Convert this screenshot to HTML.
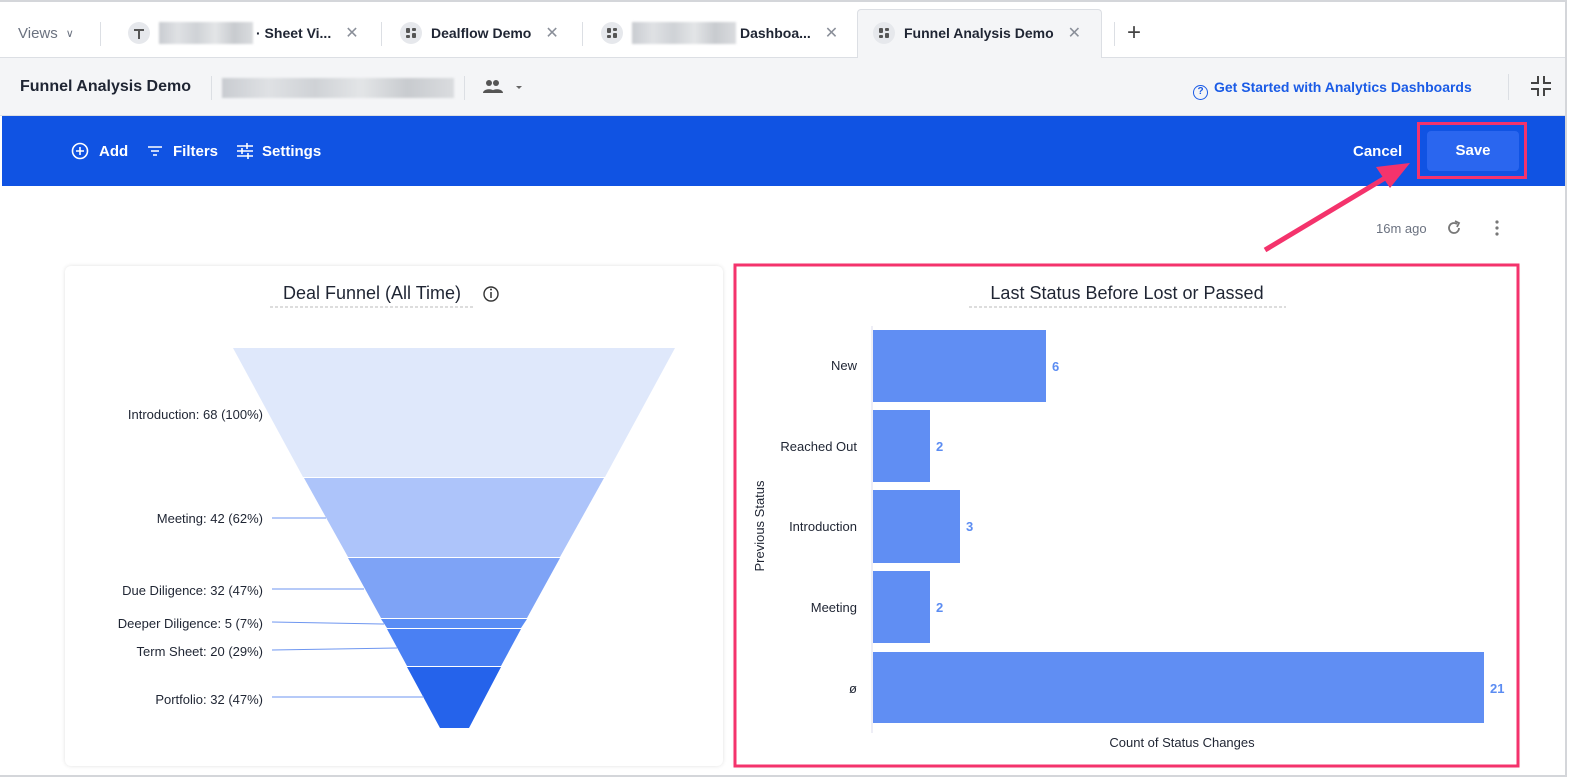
<!DOCTYPE html>
<html><head><meta charset="utf-8"><style>
*{box-sizing:border-box;margin:0;padding:0}
body{width:1578px;height:782px;overflow:hidden;background:#fff;font-family:"Liberation Sans",sans-serif;position:relative;color:#1f2533}
.a{position:absolute}
.frame{left:0;top:0;width:1567px;height:777px;border:2px solid #d4d6da;border-left:none}
.tabs{left:0;top:2px;width:1565px;height:56px;background:#fff;border-bottom:1px solid #dcdfe4}
.tab{position:absolute;top:3px;height:56px;display:flex;align-items:center;font-size:14px;font-weight:bold;color:#1f2533}
.ic{width:22px;height:22px;border-radius:11px;background:#e6e8ec;margin-right:9px;display:flex;align-items:center;justify-content:center}
.x{color:#8a8f99;font-weight:normal;font-size:16px;margin-left:14px}
.blur{background:linear-gradient(90deg,#c9ccd1,#dfe1e4,#cfd2d6,#e3e5e7,#c8cbcf,#dadcdf);height:22px;filter:blur(1px)}
.sep{width:1px;height:24px;background:#dcdfe4;position:absolute;top:20px}
.hdr{left:0;top:58px;width:1565px;height:58px;background:#f4f5f7;border-bottom:1px solid #dcdfe4}
.bar{left:2px;top:116px;width:1563px;height:70px;background:#1053e3;color:#fff;font-size:15px;font-weight:bold}
.card{background:#fff;border-radius:6px;box-shadow:0 0 4px rgba(0,0,0,.12)}
</style></head><body>
<div class="a frame"></div>
<div class="a tabs">
 <div class="tab" style="left:18px;color:#6b7280;font-weight:normal;font-size:15px">Views <span style="margin-left:8px;font-size:11px">&#8744;</span></div>
 <div class="sep" style="left:100px"></div>
 <div class="tab" style="left:128px"><div class="ic"><svg width="12" height="12"><path d="M1 3h10M6 3v9" stroke="#555" stroke-width="2"/></svg></div><div class="blur" style="width:94px;margin-right:3px"></div>· Sheet Vi...<span class="x">✕</span></div>
 <div class="sep" style="left:381px"></div>
 <div class="tab" style="left:400px"><div class="ic"><svg width="12" height="12"><rect x="1" y="1" width="4" height="5" rx="1" fill="#555"/><rect x="7" y="1" width="4" height="3" rx="1" fill="#555"/><rect x="1" y="8" width="4" height="3" rx="1" fill="#555"/><rect x="7" y="6" width="4" height="5" rx="1" fill="#555"/></svg></div>Dealflow Demo<span class="x">✕</span></div>
 <div class="sep" style="left:582px"></div>
 <div class="tab" style="left:601px"><div class="ic"><svg width="12" height="12"><rect x="1" y="1" width="4" height="5" rx="1" fill="#555"/><rect x="7" y="1" width="4" height="3" rx="1" fill="#555"/><rect x="1" y="8" width="4" height="3" rx="1" fill="#555"/><rect x="7" y="6" width="4" height="5" rx="1" fill="#555"/></svg></div><div class="blur" style="width:104px;margin-right:4px"></div>Dashboa...<span class="x">✕</span></div>
 <div class="a" style="left:857px;top:7px;width:245px;height:50px;background:#f4f5f7;border:1px solid #dcdfe4;border-bottom:none;border-radius:4px 4px 0 0"></div>
 <div class="tab" style="left:873px"><div class="ic"><svg width="12" height="12"><rect x="1" y="1" width="4" height="5" rx="1" fill="#555"/><rect x="7" y="1" width="4" height="3" rx="1" fill="#555"/><rect x="1" y="8" width="4" height="3" rx="1" fill="#555"/><rect x="7" y="6" width="4" height="5" rx="1" fill="#555"/></svg></div>Funnel Analysis Demo<span class="x">✕</span></div>
 <div class="sep" style="left:1114px"></div>
 <div class="tab" style="left:1127px;font-size:24px;font-weight:normal;color:#444">+</div>
</div>
<div class="a hdr">
 <div class="a" style="left:20px;top:20px;font-size:16px;font-weight:bold">Funnel Analysis Demo</div>
 <div class="a" style="left:211px;top:18px;width:1px;height:24px;background:#dcdfe4"></div>
 <div class="a blur" style="left:222px;top:20px;width:232px;height:20px"></div>
 <div class="a" style="left:464px;top:18px;width:1px;height:24px;background:#dcdfe4"></div>
 <svg class="a" style="left:483px;top:21px" width="44" height="16"><circle cx="6" cy="4" r="3" fill="#555"/><circle cx="13" cy="4" r="3" fill="#555"/><path d="M0 14c0-5 12-5 12 0zM8 14c0-5 12-5 12 0z" fill="#555"/><path d="M33 7l3 3 3-3z" fill="#666"/></svg>
 <div class="a" style="left:1193px;top:21px;font-size:14px;font-weight:bold;color:#1a5be6"><span style="display:inline-block;width:15px;height:15px;border:1.6px solid #1a5be6;border-radius:50%;font-size:10px;text-align:center;line-height:12px;margin-right:6px;vertical-align:-2px">?</span>Get Started with Analytics Dashboards</div>
 <div class="a" style="left:1508px;top:16px;width:1px;height:26px;background:#dcdfe4"></div>
 <svg class="a" style="left:1530px;top:17px" width="22" height="22"><path d="M8 1v7H1M14 1v7h7M8 21v-7H1M14 21v-7h7" stroke="#444" stroke-width="2" fill="none"/></svg>
</div>
<div class="a bar">
 <svg class="a" style="left:69px;top:26px" width="18" height="18"><circle cx="9" cy="9" r="7.5" stroke="#fff" stroke-width="1.6" fill="none"/><path d="M9 5v8M5 9h8" stroke="#fff" stroke-width="1.6"/></svg>
 <div class="a" style="left:97px;top:27px">Add</div>
 <svg class="a" style="left:145px;top:27px" width="16" height="16"><path d="M1 4h14M4 8h8M6 12h4" stroke="#fff" stroke-width="1.6"/></svg>
 <div class="a" style="left:171px;top:27px">Filters</div>
 <svg class="a" style="left:234px;top:26px" width="18" height="18"><path d="M1 4h16M1 9h16M1 14h16" stroke="#fff" stroke-width="1.5"/><path d="M11 1v6M6 6v6M12 11v6" stroke="#fff" stroke-width="1.6"/></svg>
 <div class="a" style="left:260px;top:27px">Settings</div>
 <div class="a" style="left:1351px;top:27px">Cancel</div>
 <div class="a" style="left:1425px;top:15px;width:92px;height:40px;background:#2a66ef;border-radius:4px;text-align:center;line-height:40px">Save</div>
 <div class="a" style="left:1415px;top:6px;width:110px;height:57px;border:3px solid #f4336c"></div>
</div>
<div class="a" style="left:1376px;top:221px;font-size:13px;color:#6b7280">16m ago</div>
<svg class="a" style="left:1445px;top:219px" width="18" height="18"><path d="M14 9a5 5 0 1 1-2-4" stroke="#777" stroke-width="1.8" fill="none"/><path d="M10 2l4 2-2 4" fill="none" stroke="#777" stroke-width="1.8"/></svg>
<svg class="a" style="left:1494px;top:219px" width="6" height="18"><circle cx="3" cy="3" r="1.6" fill="#777"/><circle cx="3" cy="9" r="1.6" fill="#777"/><circle cx="3" cy="15" r="1.6" fill="#777"/></svg>
<div class="a card" style="left:65px;top:266px;width:658px;height:500px"></div>
<div class="a card" style="left:735px;top:266px;width:782px;height:500px;border-radius:0"></div>
<svg class="a" style="left:0;top:0" width="1578" height="782">
 <line x1="1265" y1="250" x2="1390" y2="175" stroke="#f4336c" stroke-width="5"/>
 <path d="M1410 163l-34 4 14 21z" fill="#f4336c"/>
 <rect x="735" y="265" width="783" height="501" fill="none" stroke="#f4336c" stroke-width="3"/>
 <text x="372" y="299" font-size="18" text-anchor="middle" fill="#1f2533" font-family="Liberation Sans">Deal Funnel (All Time)</text>
 <line x1="270" y1="307" x2="474" y2="307" stroke="#bbb" stroke-dasharray="3 2"/>
 <circle cx="491" cy="294" r="7" fill="none" stroke="#333" stroke-width="1.4"/><path d="M491 292v6" stroke="#333" stroke-width="1.5"/><circle cx="491" cy="289.5" r="1" fill="#333"/>
 <path d="M233 348H675L605 477H303z" fill="#dfe8fb"/>
 <path d="M304 478H604L560 557H348z" fill="#adc4fa"/>
 <path d="M348 558H560L527 618H381z" fill="#7ea3f6"/>
 <path d="M381 619H527L521 628H387z" fill="#5a8df5"/>
 <path d="M387 629H521L501 666H407z" fill="#4a80f3"/>
 <path d="M407 667H501L469 728H440z" fill="#2563eb"/>
 <g stroke="#6e96f0" stroke-width="1"><line x1="272" y1="518" x2="326" y2="518"/><line x1="272" y1="589" x2="364" y2="589"/><line x1="272" y1="622" x2="384" y2="624"/><line x1="272" y1="650" x2="397" y2="648"/><line x1="272" y1="697" x2="424" y2="697"/></g>
 <g font-size="13" fill="#1f2533" text-anchor="end" font-family="Liberation Sans">
 <text x="263" y="419">Introduction: 68 (100%)</text><text x="263" y="523">Meeting: 42 (62%)</text><text x="263" y="595">Due Diligence: 32 (47%)</text><text x="263" y="628">Deeper Diligence: 5 (7%)</text><text x="263" y="656">Term Sheet: 20 (29%)</text><text x="263" y="704">Portfolio: 32 (47%)</text>
 <text x="857" y="370">New</text><text x="857" y="451">Reached Out</text><text x="857" y="531">Introduction</text><text x="857" y="612">Meeting</text><text x="857" y="693">ø</text>
 </g>
 <text x="1127" y="299" font-size="18" text-anchor="middle" fill="#1f2533" font-family="Liberation Sans">Last Status Before Lost or Passed</text>
 <line x1="969" y1="307" x2="1286" y2="307" stroke="#bbb" stroke-dasharray="3 2"/>
 <line x1="872" y1="326" x2="872" y2="733" stroke="#dde"/>
 <g fill="#608ef3"><rect x="873" y="330" width="173" height="72"/><rect x="873" y="410" width="57" height="72"/><rect x="873" y="490" width="87" height="73"/><rect x="873" y="571" width="57" height="72"/><rect x="873" y="652" width="611" height="71"/></g>
 <g font-size="13" font-weight="bold" fill="#5b8cf2" font-family="Liberation Sans"><text x="1052" y="371">6</text><text x="936" y="451">2</text><text x="966" y="531">3</text><text x="936" y="612">2</text><text x="1490" y="693">21</text></g>
 <text x="1182" y="747" font-size="13" text-anchor="middle" fill="#1f2533" font-family="Liberation Sans">Count of Status Changes</text>
 <text transform="translate(764 526) rotate(-90)" font-size="13" text-anchor="middle" fill="#1f2533" font-family="Liberation Sans">Previous Status</text>
</svg>
</body></html>
